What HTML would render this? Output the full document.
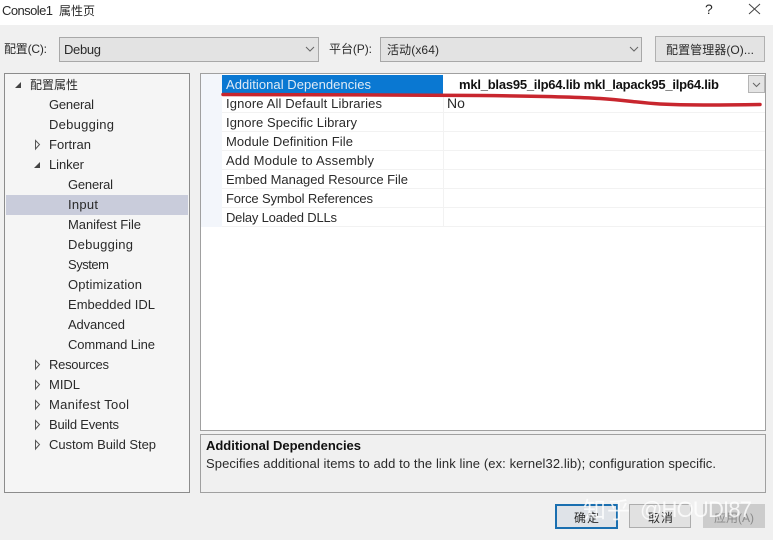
<!DOCTYPE html>
<html><head><meta charset="utf-8"><style>
html,body{margin:0;padding:0;background:#f0f0f0;width:773px;height:540px;overflow:hidden}
svg{display:block}
text{font-family:"Liberation Sans","Noto Sans CJK SC",sans-serif;font-size:13px;fill:#2a2a2a}
</style></head><body>
<svg width="773" height="540" viewBox="0 0 773 540" xmlns="http://www.w3.org/2000/svg">
<rect width="773" height="540" fill="#f0f0f0"/>
<rect width="773" height="25" fill="#fff"/>
<text x="2" y="15" textLength="51" lengthAdjust="spacing">Console1</text>
<text x="59" y="15" textLength="36" lengthAdjust="spacing" style="font-size:12px">属性页</text>
<text x="705" y="14" style="font-size:14px" fill="#333">?</text>
<path d="M749 4L760 14M760 4L749 14" stroke="#444" stroke-width="1" fill="none"/>

<text x="4" y="53" textLength="43" lengthAdjust="spacing" style="font-size:12px">配置(C):</text>
<rect x="59.500" y="37.500" width="259" height="24" fill="#e3e3e3" stroke="#a8a8a8"/>
<text x="64" y="54" textLength="37" lengthAdjust="spacing">Debug</text>
<path d="M306 47L310 51L314 47" stroke="#666" fill="none"/>
<text x="329" y="53" textLength="43" lengthAdjust="spacing" style="font-size:12px">平台(P):</text>
<rect x="380.500" y="37.500" width="261" height="24" fill="#e3e3e3" stroke="#a8a8a8"/>
<text x="387" y="54" textLength="52" lengthAdjust="spacing" style="font-size:12px">活动(x64)</text>
<path d="M630 47L634 51L638 47" stroke="#666" fill="none"/>
<rect x="655.500" y="36.500" width="109" height="25" fill="#e3e3e3" stroke="#b0b0b0"/>
<text x="666" y="54" textLength="88" lengthAdjust="spacing" style="font-size:12px">配置管理器(O)...</text>

<rect x="4.500" y="73.500" width="185" height="419" fill="#f5f5f5" stroke="#8c8c8c"/>
<rect x="6" y="195" width="182" height="20" fill="#c9ccdb"/>
<path d="M15 88L21 88L21 82Z" fill="#444"/>
<text x="30" y="89" textLength="48" lengthAdjust="spacing" style="font-size:12px">配置属性</text>
<text x="49" y="109" textLength="45" lengthAdjust="spacing">General</text>
<text x="49" y="129" textLength="65" lengthAdjust="spacing">Debugging</text>
<path d="M35.500 140.500L39.500 144.500L35.500 149Z" fill="none" stroke="#555"/>
<text x="49" y="149" textLength="42" lengthAdjust="spacing">Fortran</text>
<path d="M34 168L40 168L40 162Z" fill="#444"/>
<text x="49" y="169" textLength="35" lengthAdjust="spacing">Linker</text>
<text x="68" y="189" textLength="45" lengthAdjust="spacing">General</text>
<text x="68" y="209" textLength="30" lengthAdjust="spacing">Input</text>
<text x="68" y="229" textLength="73" lengthAdjust="spacing">Manifest File</text>
<text x="68" y="249" textLength="65" lengthAdjust="spacing">Debugging</text>
<text x="68" y="269" textLength="41" lengthAdjust="spacing">System</text>
<text x="68" y="289" textLength="74" lengthAdjust="spacing">Optimization</text>
<text x="68" y="309" textLength="87" lengthAdjust="spacing">Embedded IDL</text>
<text x="68" y="329" textLength="57" lengthAdjust="spacing">Advanced</text>
<text x="68" y="349" textLength="87" lengthAdjust="spacing">Command Line</text>
<path d="M35.500 360.500L39.500 364.500L35.500 369Z" fill="none" stroke="#555"/>
<text x="49" y="369" textLength="60" lengthAdjust="spacing">Resources</text>
<path d="M35.500 380.500L39.500 384.500L35.500 389Z" fill="none" stroke="#555"/>
<text x="49" y="389" textLength="31" lengthAdjust="spacing">MIDL</text>
<path d="M35.500 400.500L39.500 404.500L35.500 409Z" fill="none" stroke="#555"/>
<text x="49" y="409" textLength="80" lengthAdjust="spacing">Manifest Tool</text>
<path d="M35.500 420.500L39.500 424.500L35.500 429Z" fill="none" stroke="#555"/>
<text x="49" y="429" textLength="70" lengthAdjust="spacing">Build Events</text>
<path d="M35.500 440.500L39.500 444.500L35.500 449Z" fill="none" stroke="#555"/>
<text x="49" y="449" textLength="107" lengthAdjust="spacing">Custom Build Step</text>

<rect x="200.500" y="73.500" width="565" height="357" fill="#fff" stroke="#a0a0a0"/>
<rect x="201" y="74" width="21" height="153" fill="#f3f6fb"/>
<path d="M222 112.500H765M222 131.500H765M222 150.500H765M222 169.500H765M222 188.500H765M222 207.500H765M222 226.500H765M443.500 94V227" stroke="#f2f2f2" fill="none"/>
<rect x="222" y="75" width="221" height="19" fill="#0a78d2"/>
<text x="226" y="89" textLength="145" lengthAdjust="spacing" style="fill:#dfeaf5">Additional Dependencies</text>
<text x="459" y="89" textLength="260" lengthAdjust="spacing" style="font-weight:bold;fill:#111">mkl_blas95_ilp64.lib mkl_lapack95_ilp64.lib</text>
<rect x="748.500" y="75.500" width="16" height="17" fill="#e4e4e4" stroke="#b5b5b5"/>
<path d="M753 83L756.500 86.500L760 83" stroke="#666" fill="none"/>
<text x="226" y="108" textLength="156" lengthAdjust="spacing">Ignore All Default Libraries</text>
<text x="447" y="108" style="font-size:14px">No</text>
<text x="226" y="127" textLength="131" lengthAdjust="spacing">Ignore Specific Library</text>
<text x="226" y="146" textLength="127" lengthAdjust="spacing">Module Definition File</text>
<text x="226" y="165" textLength="148" lengthAdjust="spacing">Add Module to Assembly</text>
<text x="226" y="184" textLength="182" lengthAdjust="spacing">Embed Managed Resource File</text>
<text x="226" y="203" textLength="147" lengthAdjust="spacing">Force Symbol References</text>
<text x="226" y="222" textLength="111" lengthAdjust="spacing">Delay Loaded DLLs</text>
<path d="M223 94.500C300 95 400 94.500 480 95.500C530 96 570 96.500 600 98.500C625 100 640 103 660 104C690 105.500 720 105 760 104.500" stroke="#c8262e" stroke-width="3.500" fill="none" stroke-linecap="round"/>

<rect x="200.500" y="434.500" width="565" height="58" fill="#f0f0f0" stroke="#a0a0a0"/>
<text x="206" y="450" textLength="155" lengthAdjust="spacing" style="font-weight:bold;fill:#111">Additional Dependencies</text>
<text x="206" y="468" textLength="510" lengthAdjust="spacing">Specifies additional items to add to the link line (ex: kernel32.lib); configuration specific.</text>

<rect x="556" y="505" width="61" height="23" fill="#dfe3e8" stroke="#1a6fb0" stroke-width="2"/>
<text x="574" y="522" textLength="25" lengthAdjust="spacing" style="font-size:12px">确定</text>
<rect x="629.500" y="504.500" width="61" height="23" fill="#e1e1e1" stroke="#adadad"/>
<text x="648" y="522" textLength="25" lengthAdjust="spacing" style="font-size:12px">取消</text>
<rect x="703" y="504" width="62" height="24" fill="#cccccc"/>
<text x="714" y="522" textLength="40" lengthAdjust="spacing" style="font-size:12px;fill:#8a8a8a">应用(A)</text>
<text x="583" y="518" textLength="47" lengthAdjust="spacing" style="font-size:23px;fill:#fff;fill-opacity:.8">知乎</text>
<text x="640" y="517" textLength="112" lengthAdjust="spacing" style="font-size:22px;fill:#fff;fill-opacity:.8">@HOUDI87</text>
</svg>
</body></html>
